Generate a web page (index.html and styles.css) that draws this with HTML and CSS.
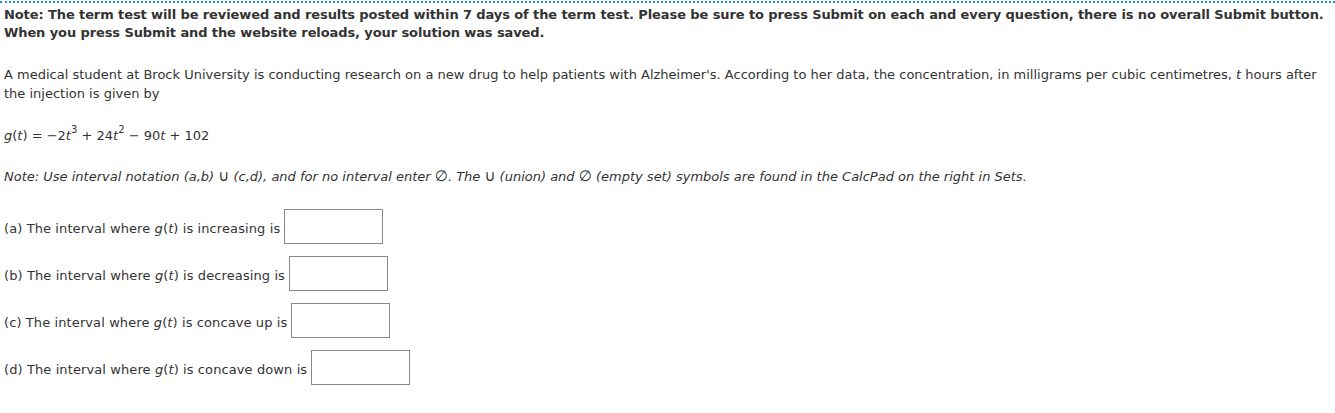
FILE: index.html
```html
<!DOCTYPE html>
<html>
<head>
<meta charset="utf-8">
<link rel="stylesheet" href="styles.css">
</head>
<body>
<div class="page">
  <div class="notice">
    <p>Note: The term test will be reviewed and results posted within 7 days of the term test. Please be sure to press Submit on each and every question, there is no overall Submit button. When you press Submit and the website reloads, your solution was saved.</p>
  </div>
  <p class="intro">A medical student at Brock University is conducting research on a new drug to help patients with Alzheimer's. According to her data, the concentration, in milligrams per cubic centimetres, <i>t</i> hours after the injection is given by</p>
  <p class="eq"><i>g</i>(<i>t</i>) = &minus;2<i>t</i><sup>3</sup> + 24<i>t</i><sup>2</sup> &minus; 90<i>t</i> + 102</p>
  <p class="hint">Note: Use interval notation (a,b) <span class="sym">&cup;</span> (c,d), and for no interval enter <span class="sym">&empty;</span>. The <span class="sym">&cup;</span> (union) and <span class="sym">&empty;</span> (empty set) symbols are found in the CalcPad on the right in Sets.</p>
  <div class="questions">
    <div class="q"><span>(a) The interval where <i>g</i>(<i>t</i>) is increasing is</span><span class="box"></span></div>
    <div class="q"><span>(b) The interval where <i>g</i>(<i>t</i>) is decreasing is</span><span class="box"></span></div>
    <div class="q"><span>(c) The interval where <i>g</i>(<i>t</i>) is concave up is</span><span class="box"></span></div>
    <div class="q"><span>(d) The interval where <i>g</i>(<i>t</i>) is concave down is</span><span class="box"></span></div>
  </div>
</div>
</body>
</html>
```
FILE: styles.css
```css
html, body {
  margin: 0;
  padding: 0;
  background: #fff;
}
body {
  font-family: "DejaVu Sans", Verdana, sans-serif;
  font-size: 13px;
  color: #333;
}
.page {
  padding: 0 4px;
}
p {
  margin: 0;
}
.notice {
  border-top: 2px dotted #1b8ee8;
  margin: 1px -4px 0 -4px;
  padding: 3px 4px 0 4px;
  font-weight: bold;
  line-height: 18px;
  letter-spacing: -0.1px;
}
.intro {
  margin-top: 23px;
  line-height: 19px;
}
.eq {
  margin-top: 23px;
  line-height: 19px;
}
sup {
  font-size: 10px;
  line-height: 0;
  vertical-align: 7px;
}
.hint {
  margin-top: 22px;
  font-style: italic;
  line-height: 19px;
}
.sym {
  font-style: normal;
  font-family: "DejaVu Sans", sans-serif;
  font-size: 15px;
  line-height: 0;
}
.questions {
  margin-top: 23px;
  display: flex;
  flex-direction: column;
  gap: 10px;
  letter-spacing: 0.1px;
}
.q {
  display: flex;
  align-items: center;
  gap: 4px;
  height: 35px;
  padding-top: 2px;
}
.box {
  width: 97px;
  height: 33px;
  border: 1px solid #888;
  background: #fff;
  margin-top: -4px;
}
```
